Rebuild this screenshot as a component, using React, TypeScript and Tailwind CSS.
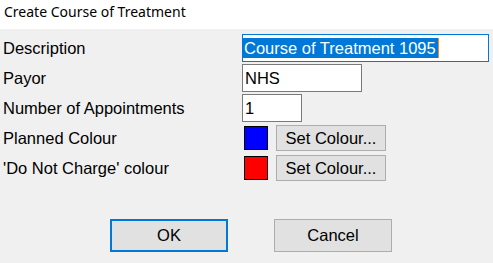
import React from 'react';

const font = { fontFamily: '"Liberation Sans", Arial, sans-serif' };

const Row: React.FC<{ label: string; children: React.ReactNode }> = ({ label, children }) => (
  <div className="flex h-[30px] items-center">
    <div className="w-[242px] pl-[3px] text-[16.5px] leading-[30px] text-black">{label}</div>
    {children}
  </div>
);

const SwatchRow: React.FC<{ label: string; swatch: string }> = ({ label, swatch }) => (
  <Row label={label}>
    <div className={`ml-[2px] h-[24px] w-[24px] border border-black ${swatch}`}></div>
    <button className="ml-[8px] h-[26px] w-[110px] border border-[#adadad] bg-[#e1e1e1] text-[16.5px] leading-[24px] text-black">
      Set Colour...
    </button>
  </Row>
);

export default function App() {
  return (
    <div className="h-[263px] w-[493px] overflow-hidden bg-[#f0f0f0]" style={font}>
      <div
        className="h-[29px] bg-white pl-[4px] pt-[3px] text-[14px] leading-[17px] text-black"
        style={{ fontFamily: '"Noto Sans", "Open Sans", sans-serif' }}
      >
        Create Course of Treatment
      </div>

      <div className="flex flex-col pt-[4px]">
        <Row label="Description">
          <div className="flex h-[28px] w-[247px] items-center border border-[#0078d7] bg-white">
            <span className="bg-[#0078d7] pl-[1px] pr-[2px] text-[16.5px] leading-[20px] text-white">
              Course of Treatment 1095
            </span>
            <span className="h-[20px] w-[1px] bg-[#f08a24]"></span>
          </div>
        </Row>
        <Row label="Payor">
          <div className="flex h-[28px] w-[120px] items-center border border-[#7a7a7a] bg-white pl-[2px] text-[16.5px] leading-[20px] text-black">
            NHS
          </div>
        </Row>
        <Row label="Number of Appointments">
          <div className="flex h-[28px] w-[60px] items-center border border-[#7a7a7a] bg-white pl-[2px] text-[16.5px] leading-[20px] text-black">
            1
          </div>
        </Row>
        <SwatchRow label="Planned Colour" swatch="bg-[#0000ff]" />
        <SwatchRow label="'Do Not Charge' colour" swatch="bg-[#ff0000]" />
      </div>

      <div className="mt-[36px] flex gap-[46px] pl-[110px]">
        <button className="h-[33px] w-[118px] border-2 border-[#0078d7] bg-[#e1e1e1] text-[16.5px] text-black">
          OK
        </button>
        <button className="h-[33px] w-[118px] border border-[#adadad] bg-[#e1e1e1] text-[16.5px] text-black">
          Cancel
        </button>
      </div>
    </div>
  );
}
